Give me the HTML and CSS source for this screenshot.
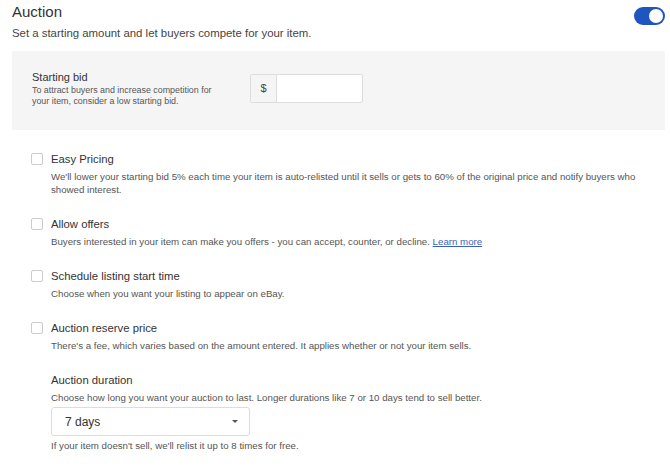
FILE: index.html
```html
<!DOCTYPE html>
<html lang="en">
<head>
    <meta charset="UTF-8">
    <meta name="viewport" content="width=device-width, initial-scale=1.0">
    <title>Auction</title>
    <link rel="stylesheet" href="styles.css">
</head>
<body>

<div class="page">
    <div class="header">
        <h1 class="title">Auction</h1>
        <span class="toggle on"><span class="knob"></span></span>
    </div>
    <p class="subtitle">Set a starting amount and let buyers compete for your item.</p>

    <div class="bid-box">
        <div class="bid-text">
            <div class="bid-label">Starting bid</div>
            <div class="bid-hint">To attract buyers and increase competition for your item, consider a low starting bid.</div>
        </div>
        <div class="price-input">
            <span class="prefix">$</span>
            <span class="field"></span>
        </div>
    </div>

    <div class="options">
        <div class="option">
            <span class="checkbox"></span>
            <div class="option-body">
                <div class="option-title">Easy Pricing</div>
                <div class="option-desc">We'll lower your starting bid 5% each time your item is auto-relisted until it sells or gets to 60% of the original price and notify buyers who showed interest.</div>
            </div>
        </div>
        <div class="option">
            <span class="checkbox"></span>
            <div class="option-body">
                <div class="option-title">Allow offers</div>
                <div class="option-desc">Buyers interested in your item can make you offers - you can accept, counter, or decline. <a href="#">Learn more</a></div>
            </div>
        </div>
        <div class="option">
            <span class="checkbox"></span>
            <div class="option-body">
                <div class="option-title">Schedule listing start time</div>
                <div class="option-desc">Choose when you want your listing to appear on eBay.</div>
            </div>
        </div>
        <div class="option">
            <span class="checkbox"></span>
            <div class="option-body">
                <div class="option-title">Auction reserve price</div>
                <div class="option-desc">There's a fee, which varies based on the amount entered. It applies whether or not your item sells.</div>
            </div>
        </div>
    </div>

    <div class="duration">
        <div class="option-title">Auction duration</div>
        <div class="option-desc">Choose how long you want your auction to last. Longer durations like 7 or 10 days tend to sell better.</div>
        <div class="select">
            <span>7 days</span>
            <span class="caret"></span>
        </div>
        <div class="option-desc footnote">If your item doesn't sell, we'll relist it up to 8 times for free.</div>
    </div>
</div>

</body>
</html>
```

FILE: styles.css
```css
body {
    font-family: "Liberation Sans", Arial, sans-serif;
    margin: 0;
    padding: 0;
    background-color: #fff;
    color: #333;
}
.page {
    padding: 3px 5px 0 12px;
}
.header {
    display: flex;
    justify-content: space-between;
    align-items: flex-start;
}
.title {
    margin: 0;
    font-size: 15px;
    font-weight: normal;
    line-height: 18px;
    color: #333;
}
.toggle {
    display: block;
    width: 31px;
    height: 18px;
    margin-top: 4px;
    border-radius: 9px;
    background-color: #ccc;
    position: relative;
}
.toggle.on {
    background-color: #1f55c0;
}
.knob {
    position: absolute;
    top: 2px;
    left: 2px;
    width: 14px;
    height: 14px;
    border-radius: 50%;
    background-color: #fff;
}
.toggle.on .knob {
    left: 15px;
}
.subtitle {
    margin: 1px 0 10px;
    font-size: 11.4px;
    line-height: 15px;
    color: #444;
}
.bid-box {
    display: flex;
    align-items: center;
    padding: 18px 20px 23px;
    background-color: #f5f5f5;
}
.bid-text {
    width: 195px;
    margin-right: 23px;
}
.bid-label {
    font-size: 11px;
    line-height: 16px;
    color: #333;
}
.bid-hint {
    font-size: 8.9px;
    line-height: 11px;
    color: #555;
}
.price-input {
    display: flex;
    width: 113px;
    height: 29px;
    box-sizing: border-box;
    border: 1px solid #ddd;
    border-radius: 2px;
    background-color: #fff;
}
.prefix {
    width: 25px;
    display: flex;
    align-items: center;
    justify-content: center;
    font-size: 11px;
    color: #444;
    background-color: #f5f5f5;
    border-right: 1px solid #ddd;
}
.field {
    flex: 1;
}
.options {
    margin-top: 21px;
}
.option {
    display: flex;
    align-items: flex-start;
    margin-bottom: 20px;
}
.checkbox {
    flex: none;
    width: 12px;
    height: 12px;
    box-sizing: border-box;
    margin: 2px 8px 0 19px;
    border: 1px solid #ccc;
    border-radius: 2px;
    background-color: #fff;
}
.option-title {
    font-size: 11.3px;
    line-height: 16px;
    color: #333;
}
.option-desc {
    margin-top: 3px;
    font-size: 9.7px;
    line-height: 13px;
    color: #555;
}
.option-desc a {
    color: #3a63b8;
}
.duration {
    padding-left: 39px;
}
.select {
    display: flex;
    justify-content: space-between;
    align-items: center;
    width: 199px;
    height: 29px;
    box-sizing: border-box;
    margin-top: 3px;
    padding: 0 11px 0 13px;
    border: 1px solid #ddd;
    border-radius: 3px;
    font-size: 12px;
    color: #333;
}
.caret {
    width: 0;
    height: 0;
    border-left: 3px solid transparent;
    border-right: 3px solid transparent;
    border-top: 3px solid #555;
}
.footnote {
    margin-top: 3px;
}
```
